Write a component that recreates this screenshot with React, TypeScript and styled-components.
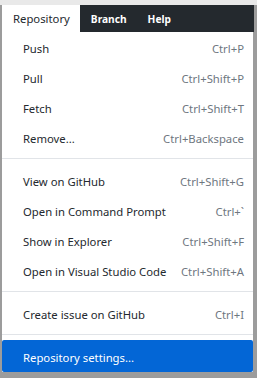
import styled, { createGlobalStyle } from "styled-components";

const GlobalStyle = createGlobalStyle`
  html, body {
    margin: 0;
    padding: 0;
    background: #9c9c9c;
    font-family: "Segoe UI", "Noto Sans", "Open Sans", sans-serif;
  }
`;

const Page = styled.div`
  width: 257px;
  height: 378px;
  overflow: hidden;
  display: flex;
  flex-direction: column;
`;

const TitleStrip = styled.div`
  height: 5px;
  background: #e9e9e9;
`;

const MenuBar = styled.div`
  display: flex;
  height: 27px;
  background: #24292e;
  margin-left: 2px;
  margin-right: 3px;
`;

const Tab = styled.div<{ $open?: boolean }>`
  display: flex;
  align-items: center;
  padding: 0 10px 0 11px;
  font-weight: ${(p) => (p.$open ? 400 : 700)};
  font-size: ${(p) => (p.$open ? 11.3 : 10.2)}px;
  color: ${(p) => (p.$open ? "#24292e" : "#ffffff")};
  background: ${(p) => (p.$open ? "#ffffff" : "transparent")};
`;

const Dropdown = styled.div`
  margin-left: 2px;
  width: 251px;
  background: #ffffff;
  display: flex;
  flex-direction: column;
`;

const Item = styled.div<{ $selected?: boolean }>`
  display: flex;
  align-items: center;
  justify-content: space-between;
  height: ${(p) => (p.$selected ? 32 : 30)}px;
  padding: 2px 9px 0 21px;
  box-sizing: border-box;
  font-size: 11.3px;
  color: ${(p) => (p.$selected ? "#ffffff" : "#24292e")};
  background: ${(p) => (p.$selected ? "#0366d6" : "transparent")};
  border-radius: ${(p) => (p.$selected ? "2px" : "0")};
`;

const Shortcut = styled.span`
  color: #6f777f;
`;

const Separator = styled.div<{ $last?: boolean }>`
  height: 1px;
  background: #e1e4e8;
  margin: 6px 0 ${(p) => (p.$last ? 5 : 6)}px;
`;

type Entry = { label: string; key?: string } | "sep";

const entries: Entry[] = [
  { label: "Push", key: "Ctrl+P" },
  { label: "Pull", key: "Ctrl+Shift+P" },
  { label: "Fetch", key: "Ctrl+Shift+T" },
  { label: "Remove...", key: "Ctrl+Backspace" },
  "sep",
  { label: "View on GitHub", key: "Ctrl+Shift+G" },
  { label: "Open in Command Prompt", key: "Ctrl+`" },
  { label: "Show in Explorer", key: "Ctrl+Shift+F" },
  { label: "Open in Visual Studio Code", key: "Ctrl+Shift+A" },
  "sep",
  { label: "Create issue on GitHub", key: "Ctrl+I" },
];

function App() {
  return (
    <Page>
      <GlobalStyle />
      <TitleStrip />
      <MenuBar>
        <Tab $open>Repository</Tab>
        <Tab>Branch</Tab>
        <Tab>Help</Tab>
      </MenuBar>
      <Dropdown>
        {entries.map((e, i) =>
          e === "sep" ? (
            <Separator key={i} />
          ) : (
            <Item key={i}>
              <span>{e.label}</span>
              {e.key ? <Shortcut>{e.key}</Shortcut> : null}
            </Item>
          )
        )}
        <Separator $last />
        <Item $selected>
          <span>Repository settings...</span>
        </Item>
      </Dropdown>
    </Page>
  );
}

export default App;
